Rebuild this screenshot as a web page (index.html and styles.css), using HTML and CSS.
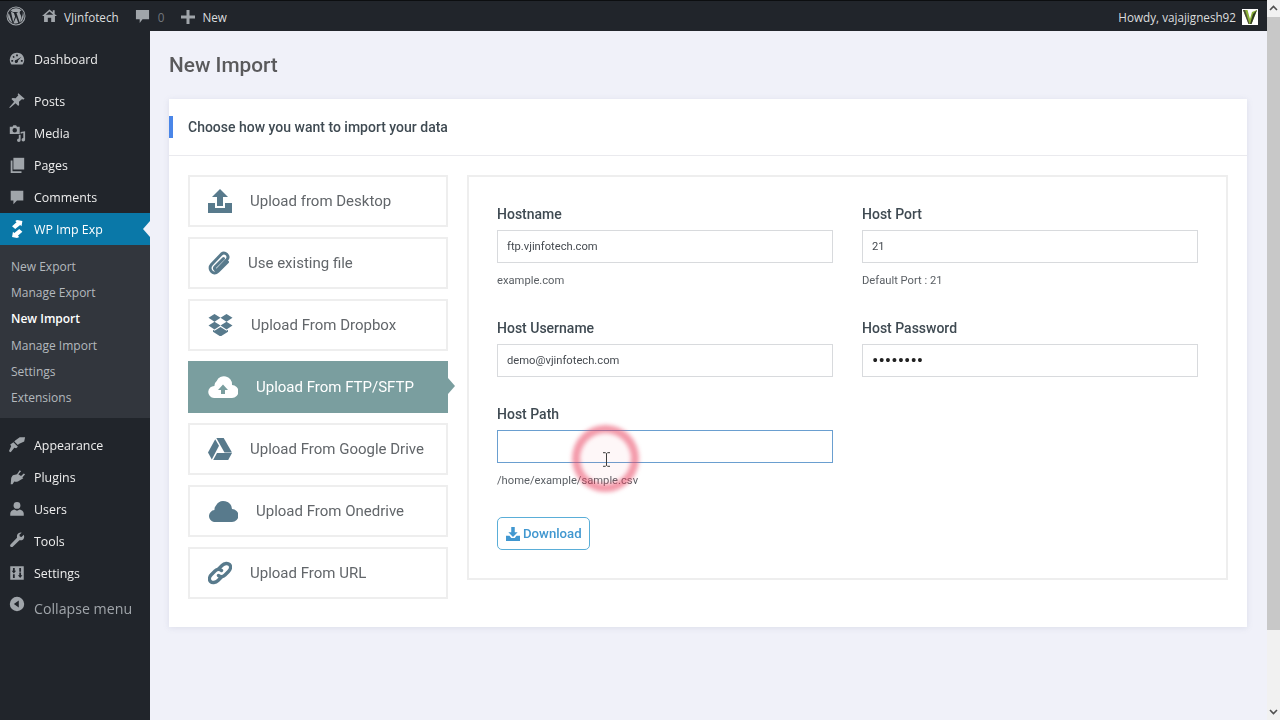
FILE: index.html
```html
<!DOCTYPE html>
<html lang="en">
<head>
<meta charset="utf-8">
<title>New Import</title>
<link rel="stylesheet" href="styles.css">
</head>
<body>
<div class="app">
  <header class="topbar">
    <svg class="wp-logo" viewBox="0 0 20 20"><path fill-rule="evenodd" d="M10 .5a9.500 9.500 0 1 0 0 19 9.500 9.500 0 0 0 0-19zM10 1.500a8.500 8.500 0 1 1 0 17 8.500 8.500 0 0 1 0-17z"/><path d="M2.700 7l3.700 10.100A8 8 0 0 1 2.700 7zM4 5.200A8 8 0 0 1 15.700 4.400c-1.200 0-2 1.100-2 2.100 0 1 .6 1.700 1.100 2.700.4.700.6 1.500.3 2.900l-1.400 4.400-3.300-9.700c.5 0 1-.1 1-.1.500-.1.400-.7 0-.7 0 0-1.400.1-2.300.1-.8 0-2.200-.1-2.200-.1-.5 0-.5.700 0 .7 0 0 .4.100.9.100l1.300 3.600-1.900 5.500L5 6.100c.5 0 1-.1 1-.1.500-.1.400-.7 0-.7 0 0-1.200.1-2 0zM10.100 10.900l2.200 6.200a8 8 0 0 1-4.800.1zM16.800 6.100A8 8 0 0 1 14 16.600l2.200-6.400c.4-1 .6-2 .6-2.800 0-.5 0-.9 0-1.300z"/></svg>
    <svg class="bar-home" viewBox="0 0 16 16"><path d="M8 1.500 0 8.500h2.200v6.500h4V10.500h3.600V15h4V8.500H16l-2.500-2.200V2.500h-2v2zM8 3.800l4 3.500H4z"/></svg>
    <span class="bar-site">VJinfotech</span>
    <svg class="bar-comment" viewBox="0 0 16 16"><path d="M1 1h14v10H8l-3 4v-4H1z"/></svg>
    <span class="bar-count">0</span>
    <svg class="bar-plus" viewBox="0 0 14 14"><path d="M5.500 0h3v5.500H14v3H8.500V14h-3V8.500H0v-3h5.500z"/></svg>
    <span class="bar-new">New</span>
    <span class="bar-howdy">Howdy, vajajignesh92</span>
    <svg class="avatar" viewBox="0 0 16 16"><rect width="16" height="16" fill="#fff"/><path d="M1 1h4.500L8 10l2-7 5-2-5.500 14H6.500z" fill="#8bb23a"/><path d="M1 1h2l4.500 14h-1z" fill="#4a4a3a"/><path d="M15 1 9.500 15H8l3-10z" fill="#2f3a20"/></svg>
  </header>

  <div class="workspace">
    <nav class="sidebar">
      <a class="nav-item nav-first"><svg class="nav-icon" viewBox="0 0 20 20"><path fill-rule="evenodd" d="M10 3a8 8 0 0 0-7.200 11.500L3.800 16h12.400l1-1.500A8 8 0 0 0 10 3zM9 5h2v2H9zM5 7.500l1.500-1 1 1.500-1.500 1zM3.700 11h2v2h-2zM14.300 11h2v2h-2zM15 7.500l-4 4.500a1.800 1.800 0 1 1-1.500-1.200z"/></svg>Dashboard</a>
      <a class="nav-item nav-sep"><svg class="nav-icon" viewBox="0 0 20 20"><path d="M11.500 1.500l7 6-1.800 1-1-.7-3.500 3 .2 3.500-1 1.200-3-3-5.900 5-1 .3.300-1 5-6-3-3 1.200-1 3.500.2 3-3.500-.8-1z"/></svg>Posts</a>
      <a class="nav-item"><svg class="nav-icon" viewBox="0 0 20 20"><path fill-rule="evenodd" d="M2 3h3l1-1.500h3L10 3h3v8H2zM7.500 4.500a2.500 2.500 0 1 0 0 5 2.500 2.500 0 0 0 0-5z"/><path d="M19 8v9.500a2 2 0 1 1-2-2V10l-3 .8V18a2 2 0 1 1-2-2v-4h2V9z"/></svg>Media</a>
      <a class="nav-item"><svg class="nav-icon" viewBox="0 0 20 20"><path d="M6 2h12v13H6z"/><path d="M3 5h2v12h10v2H3z"/></svg>Pages</a>
      <a class="nav-item"><svg class="nav-icon" viewBox="0 0 20 20"><path d="M3 3h14v11h-7l-4 4v-4H3z"/></svg>Comments</a>
      <a class="nav-item nav-active"><svg class="nav-icon" viewBox="0 0 20 20"><path d="M10 0l6 1-1 6-1.500-1.500L8 10 4.500 7l5-4.500L8 1z"/><path d="M10 20 4.500 19l1-6L7 14.500 12.500 10 16 13l-5 4.500 1.500 1.500z"/></svg>WP Imp Exp</a>
      <div class="submenu">
        <a class="sub-item">New Export</a>
        <a class="sub-item">Manage Export</a>
        <a class="sub-item sub-current">New Import</a>
        <a class="sub-item">Manage Import</a>
        <a class="sub-item">Settings</a>
        <a class="sub-item">Extensions</a>
      </div>
      <a class="nav-item nav-after"><svg class="nav-icon" viewBox="0 0 20 20"><path d="M19 1.500 18 6l-6 3-1 1-4-4 1-1 5-3.500zM6 7l5 5-2 1.500-2-.5-4 5-2-1 2.500-5.500-1-2z"/></svg>Appearance</a>
      <a class="nav-item"><svg class="nav-icon" viewBox="0 0 20 20"><path d="M13 2.500l1.500 1-3 3.500 3 2 3-3 1.500 1-3 3.500 1 1-6 3.500c-1.500.5-3 .5-4 0L5 18H3l.5-6c0-1.500 1-3 2-4L10 7z"/></svg>Plugins</a>
      <a class="nav-item"><svg class="nav-icon" viewBox="0 0 20 20"><circle cx="10" cy="6" r="3.800"/><path d="M2.500 17.500v-2.500c0-2.500 2.500-4 4.500-4.500l3 1.500 3-1.500c2 .5 4.500 2 4.500 4.500v2.500z"/></svg>Users</a>
      <a class="nav-item"><svg class="nav-icon" viewBox="0 0 20 20"><path d="M17.500 3 15 5.500l-1.800-.6-.6-1.800L15.100.8c-2-.5-4.400.8-5 2.900-.3 1.100-.2 2-.1 2.800L2.800 13.800c-1.500 1.500.8 4 2.500 2.500l7.400-7.200c.8.200 1.800.2 2.700 0 2.300-.7 3.300-3.300 2.100-6z"/></svg>Tools</a>
      <a class="nav-item"><svg class="nav-icon" viewBox="0 0 20 20"><path fill-rule="evenodd" d="M3 3h15v15H3zM6 5v3H4.500l2.500 3 2.500-3H8V5zM6 12v4h2v-4zM13 5v4h2V5zM14 16l-2.500-3H13v-3h2v3h1.500z" transform="translate(-.5 -.5)"/></svg>Settings</a>
      <a class="nav-collapse"><svg class="nav-icon collapse-icon" viewBox="0 0 20 20"><path fill-rule="evenodd" d="M10 2a8 8 0 1 0 0 16 8 8 0 0 0 0-16zM12 6v8L6.500 10z"/></svg>Collapse menu</a>
    </nav>

    <main class="main">
      <h1 class="page-title">New Import</h1>
      <section class="card">
        <div class="card-head"><h2 class="card-title">Choose how you want to import your data</h2></div>
        <div class="card-body">
          <ul class="source-list">
            <li class="source"><svg class="icon w24" viewBox="0 0 24 24"><path d="M12 0l8 8h-5v9H9V8H4z"/><path d="M0 14h7v5h10v-5h7v10H0z"/></svg>Upload from Desktop</li>
            <li class="source"><svg class="icon w22" viewBox="0 0 22 24"><path class="line-art" stroke-width="3" stroke-linecap="round" d="M15.500 7.500 7 16C5.500 18 8 20 9.500 18.500L19 8.500C22 5 17 0 13.500 3L3.500 13.500C-.5 18 5 25 10 20.500L19.500 11"/></svg>Use existing file</li>
            <li class="source"><svg class="icon w25" viewBox="0 0 25 22"><path d="M6.500 0l6 3.800-6 3.900-6-3.900zM18.500 0l6 3.800-6 3.900-6-3.900zM.5 11.600l6-3.900 6 3.900-6 3.900zM24.500 11.600l-6 3.900-6-3.900 6-3.900z"/><path d="M12.500 13l6 3.700 1.500-.9v2l-7.500 4.700L5 17.800v-2l1.500.9z"/></svg>Upload From Dropbox</li>
            <li class="source source-active"><svg class="icon w30" viewBox="0 0 30 22"><path fill-rule="evenodd" d="M24 9c0-.2 0-.4 0-.5A8 8 0 0 0 8.700 5 5.500 5.500 0 0 0 6.500 10 6 6 0 0 0 6 22h18a6.500 6.500 0 0 0 0-13zM15 8.500l5 5.500h-3v4h-4v-4h-3z"/></svg>Upload From FTP/SFTP</li>
            <li class="source"><svg class="icon w24" viewBox="0 0 24 22"><path d="M8.300 0h7.400l8.300 14.500h-7.500z"/><path d="M7.200 1.200 11 7.800 3.800 21.500 0 14.500z"/><path d="M9 15h15l-3.800 7H5.200z"/></svg>Upload From Google Drive</li>
            <li class="source"><svg class="icon w30" viewBox="0 0 30 22"><path d="M24 9A8.500 8.500 0 0 0 8 5.500a5.500 5.500 0 0 0-1.500 4.600A6 6 0 0 0 6 22h18a6.500 6.500 0 0 0 0-13z"/></svg>Upload From Onedrive</li>
            <li class="source"><svg class="icon w24" viewBox="0 0 24 24"><g class="line-art" stroke-width="3.400" stroke-linecap="round"><path d="M10.500 8 14 4.500C16.500 2 20 2 21.500 3.500S23 8 20.500 10.500L17 14C15 16 12 16 10.500 14.500"/><path d="M13.500 16 10 19.500C7.500 22 4 22 2.500 20.500S1 16 3.500 13.500L7 10C9 8 12 8 13.500 9.500"/></g></svg>Upload From URL</li>
          </ul>

          <form class="panel">
            <div class="fields">
              <div class="field">
                <label class="field-label">Hostname</label>
                <input class="field-input" type="text" value="ftp.vjinfotech.com">
                <p class="field-hint">example.com</p>
              </div>
              <div class="field">
                <label class="field-label">Host Port</label>
                <input class="field-input" type="text" value="21">
                <p class="field-hint">Default Port : 21</p>
              </div>
              <div class="field">
                <label class="field-label">Host Username</label>
                <input class="field-input" type="text" value="demo@vjinfotech.com">
              </div>
              <div class="field">
                <label class="field-label">Host Password</label>
                <input class="field-input field-secret" type="password" value="password">
              </div>
              <div class="field">
                <label class="field-label">Host Path</label>
                <input class="field-input field-focus" type="text">
                <p class="field-hint">/home/example/sample.csv</p>
              </div>
            </div>
            <button class="download" type="button"><svg class="download-icon" viewBox="0 0 24 24"><path d="M9 0h6v9h5l-8 8-8-8h5z"/><path d="M0 15h6l3 4h6l3-4h6v9H0z"/></svg>Download</button>
          </form>
        </div>
      </section>
    </main>
  </div>
</div>

<div class="scrollbar">
  <svg class="scroll-arrow" viewBox="0 0 13 17"><path d="M3 10l3.500-3.500L10 10" fill="none" stroke="#505050" stroke-width="1.600"/></svg>
  <div class="scroll-thumb"></div>
  <div class="scroll-rest"></div>
  <svg class="scroll-arrow" viewBox="0 0 13 17"><path d="M3 7l3.500 3.500L10 7" fill="none" stroke="#505050" stroke-width="1.600"/></svg>
</div>

<div class="click-ring"></div>
<svg class="ibeam" viewBox="0 0 9 15"><path d="M1 .7h2.500l1 1 1-1H8M4.500 1.700v11.600M1 14.300h2.500l1-1 1 1H8" fill="none" stroke="#3c3c3c" stroke-width="1"/></svg>
</body>
</html>
```

FILE: styles.css
```css
* { box-sizing: border-box; }
html, body { height: 100%; }
body {
  margin: 0;
  display: flex;
  overflow: hidden;
  font-family: Roboto, "Liberation Sans", sans-serif;
  background: #f0f1f9;
}
.app { flex: 1; min-width: 0; display: flex; flex-direction: column; height: 720px; filter: blur(.3px); }

/* top bar */
.topbar {
  height: 31px;
  flex: none;
  display: flex;
  align-items: center;
  padding-top: 1px;
  background: #21252b;
  border-top: 1px solid #0c0e10;
  color: #dcdddf;
  font: 11.700px "Open Sans", sans-serif;
  fill: #a0a5aa;
}
.wp-logo { width: 20px; height: 20px; margin: -2px 0 0 6px; }
.bar-home { width: 15px; height: 15px; margin: -2px 0 0 16px; }
.bar-site { margin-left: 7px; }
.bar-comment { width: 15px; height: 15px; margin-left: 16px; }
.bar-count { margin-left: 8px; color: #72777c; }
.bar-plus { width: 14px; height: 14px; margin-left: 17px; }
.bar-new { margin-left: 7px; }
.bar-howdy { margin-left: auto; }
.avatar { width: 16px; height: 16px; margin: 0 9px 0 6px; }

/* sidebar */
.workspace { flex: 1; display: flex; min-height: 0; }
.sidebar {
  width: 150px;
  flex: none;
  background: #21252b;
  padding-top: 12px;
  color: #eeeeee;
  fill: #a0a5aa;
  font: 12.400px "Open Sans", sans-serif;
}
.nav-item {
  position: relative;
  display: flex;
  align-items: center;
  height: 32px;
  padding-left: 8px;
}
.nav-icon { width: 18px; height: 18px; margin-right: 8px; flex: none; }
.nav-sep { margin-top: 10px; }
.nav-active { background: #0a78a8; color: #fff; fill: #fff; }
.nav-active::after {
  content: "";
  position: absolute;
  right: 0;
  top: 8px;
  border: 8px solid transparent;
  border-left-width: 0;
  border-right: 7px solid #f0f1f9;
}
.submenu { background: #32363d; padding: 8.500px 0 6.500px; }
.sub-item {
  display: block;
  height: 26.400px;
  line-height: 26.400px;
  padding-left: 11px;
  color: #b4b9be;
  font-size: 12px;
}
.sub-current { color: #fff; font-weight: 600; }
.nav-after { margin-top: 11px; }
.nav-collapse {
  display: flex;
  align-items: center;
  margin-top: 3px;
  height: 32px;
  padding-left: 8px;
  color: #a0a5aa;
  font-size: 14.200px;
}
.collapse-icon { margin-top: -8px; }

/* main */
.main { flex: 1; min-width: 0; padding: 22px 20px 0 19px; }
.page-title {
  margin: 0 0 21px;
  font-size: 20.800px;
  line-height: 25px;
  font-weight: 500;
  color: #5a5a5c;
}
.card {
  background: #fff;
  box-shadow: 0 1px 6px rgba(120, 125, 160, .16);
  padding-bottom: 28px;
}
.card-head {
  height: 57px;
  display: flex;
  align-items: center;
  border-bottom: 1px solid #eaeaee;
}
.card-title {
  margin: 0;
  height: 22px;
  line-height: 22px;
  padding-left: 15px;
  border-left: 4px solid #4a86e8;
  font-size: 14px;
  font-weight: 500;
  color: #3f4a52;
}
.card-body {
  display: flex;
  align-items: flex-start;
  gap: 19px;
  padding: 19px 19px 0 19px;
}
.source-list {
  list-style: none;
  margin: 0;
  padding: 0;
  width: 260px;
  flex: none;
  display: flex;
  flex-direction: column;
  gap: 10px;
}
.source {
  position: relative;
  height: 52px;
  display: flex;
  align-items: center;
  gap: 18px;
  padding: 0 0 1px 18px;
  border: 2px solid #eeeeee;
  font-size: 15px;
  color: #62666a;
  fill: #587a8c;
}
.source .icon { flex: none; }
.line-art { fill: none; stroke: #587a8c; }
.w22 { width: 22px; height: 24px; }
.w24 { width: 24px; height: 24px; }
.w25 { width: 25px; height: 22px; }
.w30 { width: 30px; height: 22px; }
.source-active {
  background: #7a9e9f;
  border-color: #7a9e9f;
  color: #fff;
  fill: #fff;
}
.source-active::after {
  content: "";
  position: absolute;
  left: 258px;
  top: 15px;
  border-top: 8px solid transparent;
  border-bottom: 8px solid transparent;
  border-left: 7px solid #7a9e9f;
}
.panel {
  flex: 1;
  min-width: 0;
  border: 2px solid #eeeeee;
  padding: 27px 28px 28px;
}
.fields {
  display: grid;
  grid-template-columns: 336px 336px;
  column-gap: 29px;
}
.field { margin-bottom: 27px; }
.field-label {
  display: block;
  height: 20px;
  line-height: 21px;
  margin-bottom: 6px;
  font-size: 14px;
  font-weight: 500;
  color: #3f4a52;
}
.field-input {
  display: block;
  width: 100%;
  height: 33px;
  padding: 0 9px;
  border: 1px solid #d8dadd;
  background: #fff;
  outline: none;
  font: 11.200px Roboto, sans-serif;
  color: #454a50;
}
.field-focus { border-color: #6a9fd0; }
.field-secret { color: #222; font-size: 19px; }
.field-hint {
  margin: 10px 0 2px;
  height: 16px;
  line-height: 16px;
  font-size: 11.200px;
  color: #5a5f64;
}
.download {
  display: flex;
  align-items: center;
  gap: 3px;
  width: 93px;
  height: 33px;
  margin-top: -1px;
  padding: 0 0 0 8px;
  border: 1px solid #5aaed8;
  border-radius: 5px;
  background: #fff;
  font: 500 13.200px Roboto, sans-serif;
  color: #4097d0;
  fill: #4097d0;
}
.download-icon { width: 14px; height: 14px; }

/* scrollbar */
.scrollbar {
  width: 13px;
  flex: none;
  height: 720px;
  display: flex;
  flex-direction: column;
  background: #f1f1f1;
}
.scroll-arrow { width: 13px; height: 17px; flex: none; }
.scroll-thumb { height: 613px; flex: none; background: #c8c8c8; }
.scroll-rest { flex: 1; }

/* recorded cursor overlay */
.click-ring {
  position: absolute;
  left: 572px;
  top: 425px;
  width: 67px;
  height: 67px;
  border-radius: 50%;
  border: 8px solid rgba(232, 60, 90, .5);
  background: rgba(240, 100, 120, .05);
  filter: blur(2px);
}
.ibeam {
  position: absolute;
  left: 602px;
  top: 452px;
  width: 9px;
  height: 15px;
}
```
